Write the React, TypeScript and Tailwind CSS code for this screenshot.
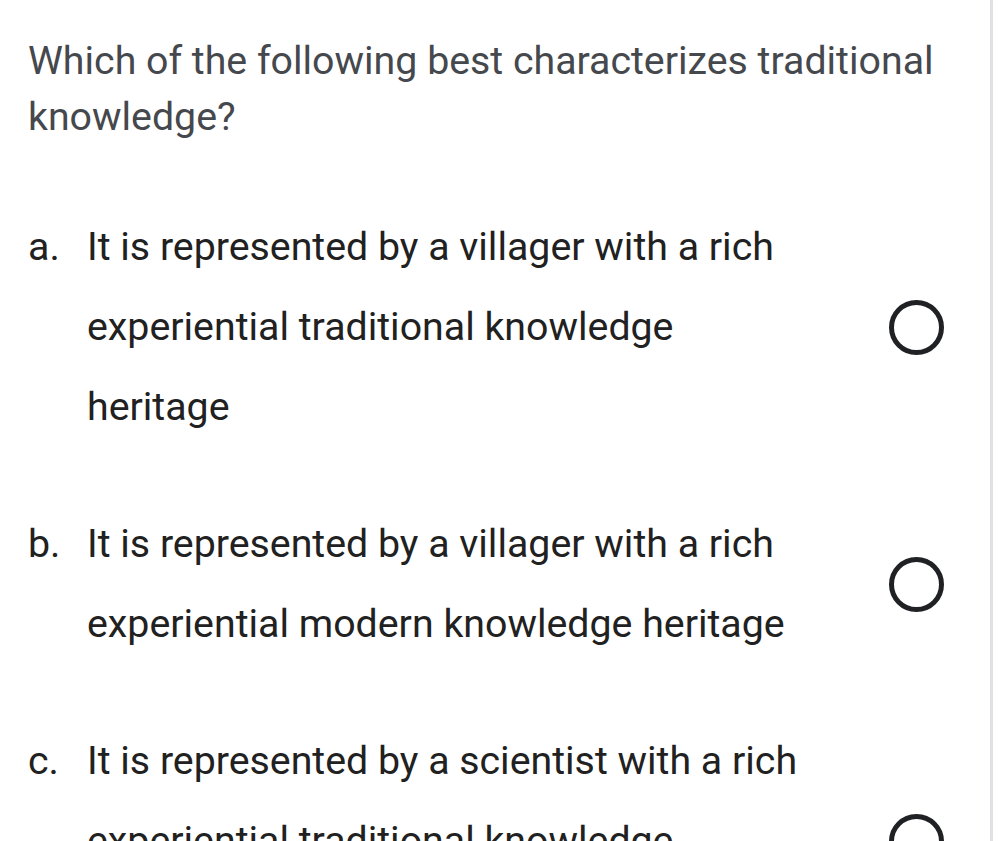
const options = [
  {
    key: "a",
    text: "It is represented by a villager with a rich experiential traditional knowledge heritage",
  },
  {
    key: "b",
    text: "It is represented by a villager with a rich experiential modern knowledge heritage",
  },
  {
    key: "c",
    text: "It is represented by a scientist with a rich experiential traditional knowledge heritage",
  },
];

export default function App() {
  return (
    <div
      className="h-[841px] w-[1004px] overflow-hidden bg-white"
      style={{ fontFamily: "Roboto, 'Noto Sans', sans-serif" }}
    >
      <div className="h-full w-[993px] border-r-[3px] border-[#dfe1e5]">
        <h1 className="w-[960px] pl-[28px] pt-[33px] text-[39.3px] font-normal leading-[56px] text-[#45484c]">
          Which of the following best characterizes traditional knowledge?
        </h1>

        <div className="mt-[62px] flex flex-col gap-[57px]">
          {options.map((opt) => (
            <div key={opt.key} className="flex items-center">
              <div className="flex w-[810px] pl-[28px] text-[39.3px] leading-[80px] text-[#212121]">
                <span className="w-[59px] shrink-0">{opt.key}.</span>
                <span className="flex-1">{opt.text}</span>
              </div>
              <div className="ml-[79px] h-[55px] w-[55px] shrink-0 rounded-full border-[5px] border-[#202124]" />
            </div>
          ))}
        </div>
      </div>
    </div>
  );
}
